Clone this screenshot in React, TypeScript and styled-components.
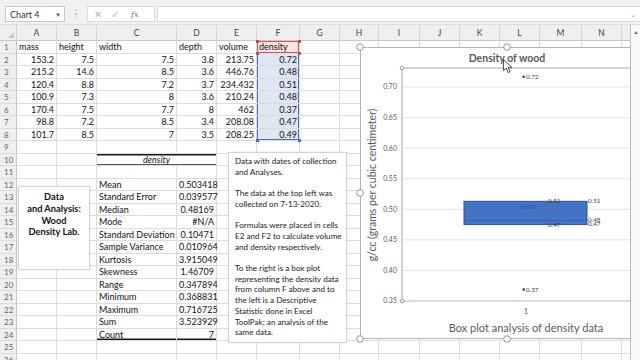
import React from 'react';
import styled, { createGlobalStyle, css } from 'styled-components';

const FONT = `Lato, "Open Sans", "Liberation Sans", sans-serif`;

const Global = createGlobalStyle`
  html, body { margin: 0; padding: 0; background: #fff; overflow: hidden; }
  body { font-family: ${FONT}; }
  #root { width: 640px; height: 360px; }
`;

const Page = styled.div`
  position: relative;
  width: 640px;
  height: 360px;
  overflow: hidden;
  display: flex;
  flex-direction: column;
  background: #fff;
  font-family: ${FONT};
`;

/* ---------- formula bar ---------- */
const FormulaBar = styled.div`
  height: 25px;
  flex: none;
  display: flex;
  align-items: flex-start;
  padding: 6px 0 0 5px;
  box-sizing: border-box;
  background: #f1f1f1;
  border-bottom: 1px solid #dedede;
`;

const NameBox = styled.div`
  width: 60px;
  height: 16px;
  box-sizing: border-box;
  background: #fff;
  border: 1px solid #c9c9c9;
  display: flex;
  align-items: center;
  justify-content: space-between;
  padding: 0 3px 0 4px;
  font-size: 9px;
  color: #333;
`;

const Caret = styled.span`
  font-size: 6px;
  color: #555;
`;

const Dots = styled.div`
  width: 22px;
  height: 16px;
  display: flex;
  flex-direction: column;
  align-items: center;
  justify-content: center;
  gap: 2px;
  & > i { width: 1.5px; height: 1.5px; background: #c4c4c4; display: block; }
`;

const FxBox = styled.div`
  width: 68px;
  height: 16px;
  box-sizing: border-box;
  background: #fff;
  border: 1px solid #dadada;
  display: flex;
  align-items: center;
  padding-left: 6px;
  gap: 9px;
  color: #b5b5b5;
  font-size: 10px;
`;

const FxLabel = styled.span`
  font-family: "DejaVu Serif", serif;
  font-style: italic;
  font-size: 8px;
  color: #777;
  margin-left: 3px;
`;

const FormulaInput = styled.div`
  flex: 1;
  height: 16px;
  margin-left: 2px;
  box-sizing: border-box;
  background: #fff;
  border: 1px solid #dadada;
  border-right: none;
  display: flex;
  align-items: center;
  justify-content: flex-end;
  padding-right: 4px;
  font-size: 7px;
  color: #888;
`;

/* ---------- sheet ---------- */
const Main = styled.div`
  flex: 1;
  display: flex;
  min-height: 0;
`;

const Sheet = styled.div`
  flex: 1;
  overflow: hidden;
  display: grid;
  grid-template-columns: 17px 40px 40px 80px 40px 40px 43px 40px 39px 41px 40px 40px 40px 42px 40px 40px;
  grid-template-rows: 16px repeat(26, 12.5px);
`;

const Scrollbar = styled.div`
  width: 10px;
  flex: none;
  background: #fafafa;
  border-left: 1px solid #bdbdbd;
  display: flex;
  justify-content: center;
  padding-top: 6px;
  box-sizing: border-box;
`;

const ScrollArrow = styled.div`
  width: 0;
  height: 0;
  border-left: 2.5px solid transparent;
  border-right: 2.5px solid transparent;
  border-bottom: 3px solid #777;
`;

const Corner = styled.div`
  background: #efefef;
  border-right: 1px solid #d2d2d2;
  border-bottom: 1px solid #c8c8c8;
  box-sizing: border-box;
  position: relative;
  &::after {
    content: '';
    position: absolute;
    right: 2px;
    bottom: 2px;
    border-left: 6px solid transparent;
    border-bottom: 6px solid #c8c8c8;
  }
`;

const ColHead = styled.div`
  background: #efefef;
  border-right: 1px solid #d6d6d6;
  border-bottom: 1px solid #c8c8c8;
  box-sizing: border-box;
  font-size: 8.5px;
  color: #444;
  display: flex;
  align-items: center;
  justify-content: center;
`;

const RowHead = styled.div`
  background: #efefef;
  border-right: 1px solid #c8c8c8;
  border-bottom: 1px solid #dcdcdc;
  box-sizing: border-box;
  font-size: 8px;
  color: #666;
  line-height: 12px;
  text-align: left;
  padding-left: 4px;
`;

type Tone = 'series' | 'values' | 'valuesEnd' | undefined;
type Rule = 'top' | 'header' | 'bottom' | undefined;

const Cell = styled.div<{ $align?: 'l' | 'r' | 'c'; $italic?: boolean; $span?: number; $tone?: Tone; $rule?: Rule }>`
  box-sizing: border-box;
  border-right: 1px solid #dcdcdc;
  border-bottom: 1px solid #dcdcdc;
  font-size: 9px;
  line-height: 12px;
  padding: 0 2px;
  color: #111;
  white-space: nowrap;
  overflow: visible;
  text-align: ${p => (p.$align === 'r' ? 'right' : p.$align === 'c' ? 'center' : 'left')};
  font-style: ${p => (p.$italic ? 'italic' : 'normal')};
  ${p => p.$span && css`grid-column: span ${p.$span};`}
  ${p => p.$tone === 'series' && css`
    background: #fbe1e2;
    box-shadow: inset 0 0 0 1px #c55a5a;
  `}
  ${p => p.$tone === 'values' && css`
    background: #dfe7f4;
    box-shadow: inset 1px 0 0 #4a6fc0, inset -1px 0 0 #4a6fc0;
  `}
  ${p => p.$tone === 'valuesEnd' && css`
    background: #dfe7f4;
    box-shadow: inset 1px 0 0 #4a6fc0, inset -1px 0 0 #4a6fc0, inset 0 -1px 0 #4a6fc0;
  `}
  ${p => p.$rule === 'top' && css`box-shadow: inset 0 1.5px 0 #1a1a1a, inset 0 -1px 0 #555;`}
  ${p => p.$rule === 'bottom' && css`box-shadow: inset 0 -1.5px 0 #1a1a1a;`}
`;

const Handle = styled.div<{ $x: number; $y: number; $color: string }>`
  position: absolute;
  left: ${p => p.$x - 1.5}px;
  top: ${p => p.$y - 1.5}px;
  width: 3px;
  height: 3px;
  background: ${p => p.$color};
`;

/* ---------- floating text boxes ---------- */
const TitleBox = styled.div`
  position: absolute;
  left: 18px;
  top: 186px;
  width: 72px;
  height: 84px;
  box-sizing: border-box;
  background: #fff;
  border: 1px solid #d3d3d3;
  box-shadow: 0 0 2px rgba(0, 0, 0, 0.12);
  padding-top: 4px;
  text-align: center;
  font-weight: 700;
  font-size: 9.3px;
  line-height: 11.8px;
  color: #111;
`;

const NoteBox = styled.div`
  position: absolute;
  left: 228px;
  top: 152px;
  width: 119px;
  height: 191px;
  box-sizing: border-box;
  background: #fff;
  border: 1px solid #d3d3d3;
  box-shadow: 0 0 2px rgba(0, 0, 0, 0.12);
  padding: 3px 0 0 6px;
  font-size: 8.1px;
  line-height: 10.7px;
  color: #222;
  white-space: nowrap;
`;

const NotePara = styled.p`
  margin: 0 0 10.7px 0;
`;

/* ---------- chart ---------- */
const ChartFrame = styled.div`
  position: absolute;
  left: 360px;
  top: 47px;
  width: 270px;
  height: 292px;
`;

const ChartSvg = styled.svg`
  display: block;
  overflow: visible;
  font-family: ${FONT};
`;

const Cursor = styled.svg`
  position: absolute;
  left: 503px;
  top: 59px;
  overflow: visible;
`;

/* ---------- data ---------- */
const COLS = ['A', 'B', 'C', 'D', 'E', 'F', 'G', 'H', 'I', 'J', 'K', 'L', 'M', 'N', 'O'];

type Def = { t?: string; a?: 'l' | 'r' | 'c'; i?: boolean; span?: number; tone?: Tone; rule?: Rule };

const data: string[][] = [
  ['153.2', '7.5', '7.5', '3.8', '213.75', '0.72'],
  ['215.2', '14.6', '8.5', '3.6', '446.76', '0.48'],
  ['120.4', '8.8', '7.2', '3.7', '234.432', '0.51'],
  ['100.9', '7.3', '8', '3.6', '210.24', '0.48'],
  ['170.4', '7.5', '7.7', '8', '462', '0.37'],
  ['98.8', '7.2', '8.5', '3.4', '208.08', '0.47'],
  ['101.7', '8.5', '7', '3.5', '208.25', '0.49'],
];

const stats: [string, string][] = [
  ['Mean', '0.503418'],
  ['Standard Error', '0.039577'],
  ['Median', '0.48169'],
  ['Mode', '#N/A'],
  ['Standard Deviation', '0.10471'],
  ['Sample Variance', '0.010964'],
  ['Kurtosis', '3.915049'],
  ['Skewness', '1.46709'],
  ['Range', '0.347894'],
  ['Minimum', '0.368831'],
  ['Maximum', '0.716725'],
  ['Sum', '3.523929'],
  ['Count', '7'],
];

function rowDefs(r: number): Def[] {
  const defs: Def[] = COLS.map(() => ({}));
  if (r === 1) {
    ['mass', 'height', 'width', 'depth', 'volume', 'density'].forEach((t, i) => (defs[i] = { t }));
    defs[5].tone = 'series';
  } else if (r >= 2 && r <= 8) {
    data[r - 2].forEach((t, i) => (defs[i] = { t, a: 'r' }));
    defs[5].tone = r === 8 ? 'valuesEnd' : 'values';
  } else if (r === 10) {
    defs[2] = { t: 'density', a: 'c', i: true, span: 2, rule: 'top' };
    defs[3] = { t: '__skip' };
  } else if (r >= 12 && r <= 24) {
    const [label, value] = stats[r - 12];
    const rule: Rule = r === 24 ? 'bottom' : undefined;
    defs[2] = { t: label, rule };
    defs[3] = { t: value, a: 'r', rule };
  }
  return defs;
}

const Y0 = 254;
const yv = (v: number) => Y0 - ((v - 0.35) / 0.05) * 30.57;

const ticks = [0.35, 0.4, 0.45, 0.5, 0.55, 0.6, 0.65, 0.7];

function Chart() {
  const boxTop = yv(0.513);
  const boxBot = yv(0.475);
  const axisGray = '#595959';
  return (
    <ChartFrame>
      <ChartSvg width={270} height={292} viewBox="0 0 270 292">
        <rect x={0.5} y={0.5} width={270} height={291} fill="#fff" stroke="#b3b3b3" strokeWidth={1} />
        <text x={147} y={15} textAnchor="middle" fontSize={10.5} fontWeight={700} fill={axisGray}>
          Density of wood
        </text>
        {ticks.slice(1).map(t => (
          <line key={t} x1={42} x2={270} y1={yv(t)} y2={yv(t)} stroke="#e3e3e3" strokeWidth={1} />
        ))}
        <line x1={42} x2={270} y1={21} y2={21} stroke="#a8a8a8" strokeWidth={1} />
        <line x1={42} x2={42} y1={21} y2={Y0} stroke="#a8a8a8" strokeWidth={1} />
        <line x1={42} x2={270} y1={Y0} y2={Y0} stroke="#b8b8b8" strokeWidth={1} />
        {ticks.map(t => (
          <text key={t} x={37} y={yv(t) + 2.4} textAnchor="end" fontSize={7} fill={axisGray}>
            {t.toFixed(2)}
          </text>
        ))}
        <circle cx={42} cy={21} r={1.8} fill="#fff" stroke="#5b8fd0" strokeWidth={0.8} />
        <circle cx={42} cy={Y0} r={1.8} fill="#fff" stroke="#5b8fd0" strokeWidth={0.8} />
        <text
          transform={`translate(16 138) rotate(-90)`}
          textAnchor="middle"
          fontSize={10.5}
          fill={axisGray}
        >
          g/cc (grams per cubic centimeter)
        </text>

        <rect x={104} y={boxTop} width={123} height={boxBot - boxTop} fill="#4472c4" stroke="#2f5597" strokeWidth={1} />
        <line x1={104} x2={227} y1={yv(0.4817)} y2={yv(0.4817)} stroke="#2f5597" strokeWidth={0.6} />
        <g fontSize={6.3} fill="#404040">
          <text x={188} y={boxTop + 2}>0.51</text>
          <text x={228} y={boxTop + 2}>0.51</text>
          <text x={160} y={yv(0.503) + 2} fill="#2d4f8e">×0.50</text>
          <text x={228} y={yv(0.4817) + 1.2}>0.48</text>
          <text x={228} y={boxBot + 1.6}>0.47</text>
          <text x={188} y={boxBot + 2.5}>0.47</text>
          <rect x={162.5} y={yv(0.716725) - 1.2} width={2.4} height={2.4} fill="#2f4f8f" />
          <text x={166} y={yv(0.716725) + 2.2}>0.72</text>
          <rect x={162.5} y={yv(0.368831) - 1.2} width={2.4} height={2.4} fill="#2f4f8f" />
          <text x={166} y={yv(0.368831) + 2.2}>0.37</text>
        </g>
        <text x={166} y={267} textAnchor="middle" fontSize={7} fill={axisGray}>1</text>
        <text x={166} y={285} textAnchor="middle" fontSize={11} fill={axisGray}>
          Box plot analysis of density data
        </text>

        {[
          [0, 0],
          [147, 0],
          [0, 146],
          [0, 292],
          [147, 292],
        ].map(([cx, cy]) => (
          <circle key={`${cx}-${cy}`} cx={cx} cy={cy} r={3.3} fill="#fff" stroke="#8a8a8a" strokeWidth={0.9} />
        ))}
      </ChartSvg>
    </ChartFrame>
  );
}

export default function App() {
  const rows = Array.from({ length: 26 }, (_, i) => i + 1);
  return (
    <Page>
      <Global />
      <FormulaBar>
        <NameBox>
          <span>Chart 4</span>
          <Caret>▼</Caret>
        </NameBox>
        <Dots>
          <i />
          <i />
          <i />
        </Dots>
        <FxBox>
          <span>✕</span>
          <span>✓</span>
          <FxLabel>fx</FxLabel>
        </FxBox>
        <FormulaInput>⌄</FormulaInput>
      </FormulaBar>
      <Main>
        <Sheet>
          <Corner />
          {COLS.map(c => (
            <ColHead key={c}>{c}</ColHead>
          ))}
          {rows.map(r => {
            const defs = rowDefs(r);
            return (
              <React.Fragment key={r}>
                <RowHead>{r}</RowHead>
                {defs.map((d, ci) =>
                  d.t === '__skip' ? null : (
                    <Cell
                      key={ci}
                      $align={d.a}
                      $italic={d.i}
                      $span={d.span}
                      $tone={d.tone}
                      $rule={d.rule}
                    >
                      {d.t}
                    </Cell>
                  )
                )}
              </React.Fragment>
            );
          })}
        </Sheet>
        <Scrollbar>
          <ScrollArrow />
        </Scrollbar>
      </Main>

      <Handle $x={257} $y={41} $color="#c0504d" />
      <Handle $x={299.5} $y={41} $color="#c0504d" />
      <Handle $x={257} $y={53.5} $color="#c0504d" />
      <Handle $x={299.5} $y={53.5} $color="#c0504d" />
      <Handle $x={257} $y={140.5} $color="#4a6fc0" />
      <Handle $x={299.5} $y={140.5} $color="#4a6fc0" />

      <TitleBox>
        Data
        <br />
        and Analysis:
        <br />
        Wood
        <br />
        Density Lab.
      </TitleBox>

      <NoteBox>
        <NotePara>
          Data with dates of collection
          <br />
          and Analyses.
        </NotePara>
        <NotePara>
          The data at the top left was
          <br />
          collected on 7-13-2020.
        </NotePara>
        <NotePara>
          Formulas were placed in cells
          <br />
          E2 and F2 to calculate volume
          <br />
          and density respectively.
        </NotePara>
        <NotePara>
          To the right is a box plot
          <br />
          representing the density data
          <br />
          from column F above and to
          <br />
          the left is a Descriptive
          <br />
          Statistic done in Excel
          <br />
          ToolPak; an analysis of the
          <br />
          same data.
        </NotePara>
      </NoteBox>

      <Chart />

      <Cursor width={10} height={15} viewBox="0 0 10 15">
        <path d="M0.5 0.5 L0.5 11.5 L3.2 9 L5.2 13.6 L7 12.8 L5.1 8.4 L8.8 8.4 Z" fill="#fff" stroke="#222" strokeWidth={0.8} strokeLinejoin="round" />
      </Cursor>
    </Page>
  );
}
